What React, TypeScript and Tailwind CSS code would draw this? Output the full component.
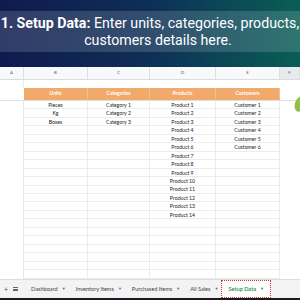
import React from "react";

const cols = [
  { l: "A", w: 24 },
  { l: "B", w: 64 },
  { l: "C", w: 62 },
  { l: "D", w: 66 },
  { l: "E", w: 64 },
  { l: "F", w: 20 },
];

const units = ["Pieces", "Kg", "Boxes"];
const cats = ["Category 1", "Category 2", "Category 3"];
const prods = Array.from({ length: 14 }, (_, i) => `Product ${i + 1}`);
const custs = Array.from({ length: 6 }, (_, i) => `Customer ${i + 1}`);
const ROWS = 21;

function Caret() {
  return <span className="ml-[4px] text-[4px] text-[#666]">▼</span>;
}

export default function App() {
  return (
    <div
      className="w-[300px] h-[300px] overflow-hidden flex flex-col bg-white"
      style={{ fontFamily: "Roboto, 'Noto Sans', sans-serif" }}
    >
      {/* Banner */}
      <div className="h-[67px] shrink-0 bg-gradient-to-r from-[#0f1a4e] via-[#0e2f56] to-[#0a5e56] pt-[11px]">
        <div className="h-[41px] bg-white/15 flex flex-col items-center justify-center text-white text-[14.2px] leading-[17px] whitespace-nowrap">
          <div>
            <span className="font-bold">1. Setup Data:</span> Enter units, categories, products,
          </div>
          <div className="pl-[16px]">customers details here.</div>
        </div>
      </div>

      {/* Sheet */}
      <div
        className="flex-1 flex flex-col overflow-hidden bg-white text-[#333]"
        style={{ fontFamily: "Lato, 'Liberation Sans', sans-serif" }}
      >
        {/* column letters */}
        <div className="h-[13px] shrink-0 flex bg-[#f8f9fa] border-b border-[#dadce0]">
          {cols.map((c, i) => (
            <div
              key={c.l}
              style={{ width: c.w }}
              className={`shrink-0 flex items-center justify-center text-[4.5px] text-[#5f6368] border-r border-[#e0e0e0] ${i === 5 ? "bg-[#e8eaed]" : ""}`}
            >
              {c.l}
            </div>
          ))}
        </div>
        {/* blank row */}
        <div className="h-[8px] shrink-0 flex">
          <div className="w-[24px] border-r border-[#eeeeee]" />
        </div>
        {/* orange header */}
        <div className="h-[13px] shrink-0 flex border-b border-[#e0e0e0]">
          <div className="w-[24px] shrink-0" />
          {["Units", "Categories", "Products", "Customers"].map((h, i) => (
            <div
              key={h}
              style={{ width: cols[i + 1].w }}
              className="shrink-0 bg-[#f1aa6c] flex items-center justify-center text-white text-[5px] font-bold border-r border-[#f4bf8f]"
            >
              {h}
            </div>
          ))}
          <div className="relative flex-1">
            <div className="absolute left-[15px] top-[8px] w-[10px] h-[16px] rounded-[50%] bg-[#8fbf4a] rotate-[20deg]" />
          </div>
        </div>
        {/* data rows */}
        {Array.from({ length: ROWS }, (_, r) => (
          <div key={r} className="h-[8.46px] shrink-0 flex">
            <div className="w-[24px] shrink-0 border-r border-[#e6e6e6]" />
            {[units[r], cats[r], prods[r], custs[r]].map((v, i) => (
              <div
                key={i}
                style={{ width: cols[i + 1].w }}
                className="shrink-0 flex items-center justify-center pt-[1.5px] text-[5.2px] leading-none text-[#222] border-r border-b border-[#ececec]"
              >
                {v ?? ""}
              </div>
            ))}
          </div>
        ))}
      </div>

      {/* Tabs */}
      <div
        className="h-[19px] shrink-0 bg-[#f1f3f4] border-t border-[#dadce0] flex items-center text-[5.6px] text-[#444]"
        style={{ fontFamily: "Lato, 'Liberation Sans', sans-serif" }}
      >
        <span className="ml-[2px] w-[8px] text-center text-[7px] text-[#555]">+</span>
        <span className="ml-[3px] w-[5px] h-[4px] border-y border-[#666] flex items-center">
          <span className="w-full h-px bg-[#666]" />
        </span>
        <span className="ml-[13px] flex items-center">Dashboard<Caret /></span>
        <span className="ml-[10px] flex items-center">Inventory Items<Caret /></span>
        <span className="ml-[10px] flex items-center">Purchased Items<Caret /></span>
        <span className="ml-[10px] flex items-center">All Sales<Caret /></span>
        <span className="ml-[3px] self-stretch px-[6px] flex items-center bg-white text-[#1e8e3e] font-semibold border-[1.5px] border-dotted border-[#d32f2f]">
          Setup Data<Caret />
        </span>
      </div>
      <div className="h-[2px] shrink-0 bg-[#1a1a1a]" />
    </div>
  );
}
